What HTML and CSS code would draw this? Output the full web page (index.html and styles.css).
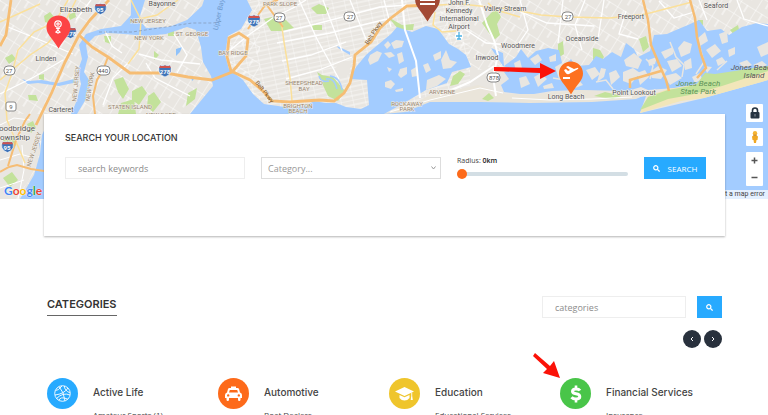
FILE: index.html
```html
<!DOCTYPE html>
<html lang="en">
<head>
  <meta charset="UTF-8">
  <meta name="viewport" content="width=device-width, initial-scale=1.0">
  <title>Search your location</title>
  <link rel="stylesheet" href="styles.css">
</head>
<body>
  <div class="map">
    <svg class="map-canvas" viewBox="0 0 768 199" preserveAspectRatio="xMidYMin slice" role="img" aria-label="Map">
      <defs>
        <pattern id="streets" width="12" height="9" patternUnits="userSpaceOnUse" patternTransform="rotate(-12)">
          <path d="M0 0H12M0 0V9M0 5H12" stroke="#fff" stroke-width="0.7" fill="none" />
        </pattern>
        <pattern id="blocks" width="17" height="14" patternUnits="userSpaceOnUse" patternTransform="rotate(32)">
          <path d="M0 0H17M0 0V14M8 0V8" stroke="#fff" stroke-width="0.9" fill="none" />
        </pattern>
        <symbol id="interstate" viewBox="0 0 14 12">
          <path d="M2 0Q4 1 7 0Q10 1 12 0Q14 3 13 7Q11 11 7 12Q3 11 1 7Q0 3 2 0Z" fill="#3f74b8" stroke="#fff" stroke-width="0.7" />
          <path d="M2 0.500Q4 1.500 7 0.500Q10 1.500 12 0.500L12.800 3H1.200Z" fill="#d0544e" />
        </symbol>
        <symbol id="pin" viewBox="0 0 24 34">
          <path d="M12 0.500C5 0.500 0 5.500 0 12.500C0 19 5 22 12 33.500C19 22 24 19 24 12.500C24 5.500 19 0.500 12 0.500Z" />
        </symbol>
      </defs>

      <rect width="768" height="199" fill="#e9e6e1" />
      <rect width="260" height="199" fill="url(#blocks)" />
      <rect x="220" width="250" height="112" fill="url(#streets)" />
      <rect x="440" width="328" height="70" fill="url(#blocks)" />

      <!-- parks -->
      <g fill="#c3e29b">
        <path d="M44 16l6-4 5 6-4 6-6-2zM68 15l7-3 1 5-6 3zM5 58l7-4 4 5-7 5zM28 95l8 0 2 6-9-1zM39 75l5-1 0 6-5-1z" />
        <path d="M168 31h6v5h-6zM104 36l7 0 0 8-6-2zM154 51l5 4-5 5zM114 80l9-3 6 12-6 10-5-7zM132 91l10-5 5 7-8 12-7-5zM121 103l13-4 2 15h-18zM148 96l6-4 7 10-8 10-6-5zM188 93l9-5-2 11-9 7z" />
        <path d="M264 19l12-3 10 4 8 8-12 3-11 0zM311 8l8-4 10 4-3 6-9 0zM312 25l10 0 0 5-9 0zM317 72l5 3 11 2 12 14-7 10-10-5zM388 17l14 8 12-1-1 6-14 0z" />
        <path d="M482 23l9-10 5-5 5 9-4 7 3 11-6 5zM453 76l7-5 5 3-7 10-8 2z" />
        <path d="M558 44l5-3 1 13-6 4zM593 48l7 2 4 7-5 7-6-3zM639 39l7-3 3 11-6 5zM698 20l5 0 0 5-5-1zM730 30l8-5 2 9-5 2z" />
        <path d="M3 140l8-5 6 8-4 8-9-2zM15 117l9-2 4 7-8 3zM3 175l9-6 6 8-8 7z" />
      </g>

      <!-- bays and ocean -->
      <g fill="#a3ccff">
        <path d="M131 0L145 0L139 19L146 28L169 27L187 20L202 6L204 0H247L252 10L241 29L228 36L225 55L229 69L243 80L253 94L264 104L292 108L306 106L314 101L326 103L336 103L346 107L361 109L369 105L367 80L350 79L356 67L366 55L374 48L391 34L397 27L412 32L426 26L438 29L449 44L458 49L466 55L471 67L452 72L447 83L426 90L404 103L384 114H190L213 86L211 76L203 62L201 47L196 30L187 27L166 34L147 36L124 34L108 33L95 36L86 45L88 57L84 72L91 83L86 99L77 114H71L77 100L81 84L78 70L82 59L79 45L86 34L101 29L121 26L131 15Z" />
        <path d="M384 114L426 102L456 99L483 102L530 102L590 100L634 98L646 96L640 113L704 98L768 80V199H20L34 175L40 154L42 135L52 114Z" />
        <path d="M491 48L503 53L504 66L516 57L521 49L528 58L536 51L548 48L559 50L563 67L571 59L576 66L589 65L596 56L603 59L612 52L621 57L626 43L634 49L638 57L650 51L654 35L667 34L676 30L688 25L699 20L707 31L721 29L729 35L742 27L757 23L768 24V73L744 77L725 83L707 78L690 87L674 88L648 90L641 87L621 93L596 91L578 90L552 91L528 95L504 92L501 85L509 79L504 72L516 70L503 66Z" />
        <path d="M337 46L350 52L350 55L338 48ZM22 79L29 81L42 80L58 83L78 78V82L59 86L38 83L28 84ZM28 129L33 142L40 143V150L31 147Z" />
      </g>

      <!-- land in front of the bay -->
      <path d="M20 114H44V128L38 136L40 150L35 166L28 182L14 199H0V114Z" fill="#e9e6e1" />
      <path d="M3 140l8-5 6 8-4 8-9-2zM3 178l9-6 6 8-8 7zM27 124l6-3 3 7-5 5z" fill="#c3e29b" />
      <path d="M0 125L14 118L30 120M0 160L20 154L34 158M18 199L24 170L22 145M0 188L24 180" stroke="#fff" fill="none" />

      <!-- marsh islands -->
      <g fill="#e9e6e1">
        <path d="M370 55l7-4 5 2-4 8-8 4-2-5zM384 45l4-4 3 4-4 4zM391 43l5-3 8 1-2 6-8 2zM384 53l7-1 4 4-6 2zM397 54l5-2 2 9-5 3zM400 69l7-2 0 7-6 4-3-3zM411 70l5-3 1 9-5 1zM385 82l6-2 4 4-4 5-6-2zM395 90l8-2 0 3-7 1zM387 67l5 2-3 3zM433 55l8-4 0 7-6 3zM423 65l5-2 3 7-5 3zM441 60l5-10 4 10 7 2-6 6-8 1zM427 80l12-5 7 4-9 7-11 4z" />
        <path d="M341 60l10 2-2 13-10 3-5-7zM519 78l7-2 4 8-9 4zM530 59l8-5 4 6-7 5zM534 77l7-4 6 6-9 8zM543 86l9-3 2 5-10 1zM549 57l7-3 0 7-6 1zM555 67l7-4 4 8-7 8zM586 70l9-3 5 7-8 6zM601 68l5 1-2 8-7 5zM609 73l7-3 4 7-9 8zM624 60l10-7 8 7-4 9-12-3zM623 72l10-4 7 5-9 11-8-3zM637 73l8-3 4 7-9 8zM648 60l9-3-2 7-6 2zM650 72l8-6 9 4-6 9-9-1z" />
        <path d="M661 52l12-5 0 7-8 5zM667 61l10-2 5 7-10 6zM664 76l12-3 6 5-12 7zM678 48l6-7 8 3-2 9-9 4zM684 62l7-4 1 10-7 2zM698 38l7-6 3 9-8 5zM706 50l9-6 6 7-9 7zM719 34l8-3 1 11-6 2zM716 60l6-3 4 5-8 4zM728 50l7-3 0 7-6 3zM704 66l8 1-5 6zM739 63l8-3 5 5-8 3zM757 47l11-5v12l-7 3zM753 65l9-4 5 4-7 3zM692 77l8-4 2 6-7 4zM514 63l6-3 2 8-6 3zM570 81l7-3 6 7-8 3z" />
      </g>
      <g fill="none" stroke="#e9e6e1" stroke-width="1.500">
        <path d="M646 59l7 7-3 13M670 42l6 15 8 8-2 12M699 44l5 18-8 12M717 70l10-9M553 78l17 3 5-10M596 82l10-2 7 9" />
      </g>

      <!-- barrier beaches -->
      <path d="M384 114L410 105L428 96L452 91L478 85L505 94L540 94L580 90L628 91L645 95L636 99L592 102L530 103L480 102L430 102L405 112Z" fill="#eae5da" />
      <path d="M640 113L648 96L668 89L698 84L717 78L768 68V80L704 98L681 101Z" fill="#f2e6ba" />
      <path d="M640 110L648 97L668 90L696 85L705 73L715 74L768 66V71L722 86L690 95L668 99ZM594 96l11-4 17 4-10 3zM482 99l7-6 5 5-6 3z" fill="#c3e29b" />
      <path d="M512 98L550 100L592 99L632 97M390 112L430 100L480 88L503 93" fill="none" stroke="#fff" stroke-width="1" />
      <path d="M326 79q8-2 11 10M330 76q10 1 12 14M319 76q2 7 10 5" fill="none" stroke="#a3ccff" stroke-width="1.500" />
      <path d="M176 49l6-2-2 5-4 4zM191 77l3 2-2 2z" fill="#8fc2fa" />

      <!-- roads -->
      <g fill="none" stroke="#fff" stroke-width="1.300">
        <path d="M402 0L405 30L416 61L420 98M479 0L487 25L494 40L498 55L493 77L496 96M440 95L470 82L494 66" stroke-width="2" />
        <path d="M0 94L34 77L63 60M8 27L45 42L73 54M91 0L76 20M105 31L112 46L122 53M132 59L113 78L103 105M139 54L161 60L200 64M146 63L155 78L190 96M177 73L187 55L174 34" />
        <path d="M229 51L250 34L274 17L293 8L306 0M282 32L316 24L380 7L421 4M299 0L317 39L339 79M323 0L342 51M350 0L368 44M384 0L391 27M277 43L330 33L387 19M282 61L311 55L346 42M286 79L319 70L352 57" />
        <path d="M460 26L486 43L510 45M512 8L547 23L594 26M520 0L528 30L517 46M563 0L558 43M585 0L575 25L582 50M604 0L598 39M626 11L619 34L638 39M659 1L674 18L694 12M699 0L707 20M737 0L744 19L768 26" />
      </g>
      <g fill="none" stroke="#fbe09a" stroke-width="1.500">
        <path d="M0 80L30 55L48 43L65 22L76 0M25 163L7 120L5 93L12 73L18 50L34 32L55 22L68 0M131 0L136 10L141 20L139 49L128 64M281 20L284 42L290 78L292 101M135 20L157 15L178 0M0 22L40 4" />
        <path d="M419 6L460 4L510 9L541 15L568 17L610 18L646 14L692 2M435 12L433 25L442 32L456 31M488 3L496 10L520 17" />
      </g>
      <g fill="none" stroke="#f6bd74" stroke-width="2.800">
        <path d="M0 46L6 35L11 0M36 125L52 92L65 62L79 35L90 20L109 0" />
        <path d="M79 35L92 47L108 57L119 65L130 73L166 73L188 77L212 80L232 72L246 56L248 39L239 33L229 38L227 57L231 71L250 80L264 92L272 101L290 102L319 100L334 101L344 93L350 83L354 66L355 55L371 42L380 28L391 18L407 6L430 5" />
        <path d="M108 57L103 70L97 80L93 96L95 114M258 15L266 4L278 0M266 4L283 27M248 29L256 17" stroke-width="2" />
        <path d="M643 0L648 20L651 45L659 64L666 80L669 91M630 88L630 80L661 71M690 0L695 18L697 37L701 54L706 68L697 78" stroke-width="2.500" />
        <path d="M0 172L9 167L17 165L31 169L44 171M8 166L16 140L25 121L30 114" stroke-width="2" />
      </g>
      <path d="M99 32L132 32L159 28L192 23L213 23L223 21" fill="none" stroke="#8295b2" stroke-width="0.700" stroke-dasharray="3 2" />

      <!-- road signs -->
      <g class="sign-blue">
        <use href="#interstate" x="94" y="3" width="13" height="12" /><text x="100" y="12">95</text>
        <use href="#interstate" x="64" y="27" width="13" height="12" /><text x="71" y="36">278</text>
        <use href="#interstate" x="158" y="65" width="14" height="12" /><text x="165" y="74">278</text>
        <use href="#interstate" x="247" y="15" width="14" height="12" /><text x="254" y="24">278</text>
        <use href="#interstate" x="1" y="141" width="13" height="12" /><text x="7" y="150">95</text>
      </g>
      <g class="sign-white">
        <rect x="4" y="66" width="11" height="9" rx="4" /><text x="9" y="73">27</text>
        <rect x="97" y="66" width="13" height="9" rx="4" /><text x="103" y="73">440</text>
        <rect x="274" y="13" width="11" height="9" rx="4" /><text x="279" y="20">27</text>
        <rect x="344" y="12" width="11" height="9" rx="4" /><text x="350" y="19">27</text>
        <rect x="562" y="12" width="11" height="9" rx="4" /><text x="568" y="19">27</text>
        <rect x="487" y="73" width="13" height="9" rx="4" /><text x="494" y="80">878</text>
        <rect x="6" y="102" width="10" height="9" rx="2" /><text x="11" y="109">9</text>
      </g>

      <!-- place names -->
      <g class="town">
        <text x="76" y="12" class="town-big">Elizabeth</text>
        <text x="162" y="6">Bayonne</text>
        <text x="46" y="61">Linden</text>
        <text x="61" y="112">Carteret</text>
        <text x="17" y="131" class="town-big">oodbridge</text>
        <text x="15" y="140" class="town-big">ownship</text>
        <text x="459" y="5">John F.</text>
        <text x="459" y="13">Kennedy</text>
        <text x="459" y="21">International</text>
        <text x="459" y="29">Airport</text>
        <text x="505" y="11">Valley Stream</text>
        <text x="518" y="48">Woodmere</text>
        <text x="487" y="60">Inwood</text>
        <text x="582" y="41">Oceanside</text>
        <text x="631" y="19">Freeport</text>
        <text x="716" y="8">Seaford</text>
        <text x="566" y="99">Long Beach</text>
        <text x="634" y="95">Point Lookout</text>
      </g>
      <g class="district">
        <text x="148" y="23">NEW JERSEY</text>
        <text x="149" y="40">NEW YORK</text>
        <text x="192" y="36">ST. GEORGE</text>
        <text x="233" y="55">BAY RIDGE</text>
        <text x="130" y="109">STATEN ISLAND</text>
        <text x="161" y="117">NEW DORP</text>
        <text x="280" y="6">PARK SLOPE</text>
        <text x="304" y="85">SHEEPSHEAD</text>
        <text x="304" y="91">BAY</text>
        <text x="298" y="108">BRIGHTON</text>
        <text x="298" y="113">BEACH</text>
        <text x="407" y="106">ROCKAWAY</text>
        <text x="407" y="111">PARK</text>
        <text x="442" y="94">ARVERNE</text>
        <text transform="translate(78 84) rotate(-84)">NEW JERSEY</text>
        <text transform="translate(92 87) rotate(-80)">NEW YORK</text>
        <text transform="translate(36 150) rotate(-72)">NEW JERSEY</text>
      </g>
      <text class="road-name" transform="translate(375 34) rotate(-57)">Belt Pkwy</text>
      <text class="road-name" transform="translate(263 93) rotate(52)">Belt Pkwy</text>
      <text class="water-name" transform="translate(221 15) rotate(-78)">Upper Bay</text>
      <g class="park-name">
        <text x="698" y="86">Jones Beach</text>
        <text x="698" y="94">State Park</text>
      </g>
      <g class="island-name">
        <text x="753" y="70">Jones Beach</text>
        <text x="754" y="78">Island</text>
      </g>
      <circle cx="459" cy="36" r="4" fill="#fff" />
      <path d="M459 32v7M456 36h6M457 39h4" stroke="#4db1e4" stroke-width="1.300" />

      <!-- pins -->
      <use href="#pin" x="46" y="15" width="25" height="34" fill="#fc4445" />
      <g fill="none" stroke="#fff" stroke-width="1.200">
        <circle cx="58" cy="24" r="3.200" /><circle cx="58" cy="24" r="1.200" />
        <path d="M56 28l2 1 2-1M58 28v3M56 32l2-2 2 2-2 1z" />
      </g>
      <use href="#pin" x="415" y="-13" width="25" height="35" fill="#a34a35" />
      <path d="M420 0h15M420 4h15" stroke="#fff" stroke-width="2.200" />
      <use href="#pin" x="559" y="61" width="24" height="34" fill="#fd7120" />
      <path d="M564 70L566 69L568 71L570 70L566 67L568 66L574 69L577 68Q579 67 578 69L569 74Q566 75 564 70ZM563 77H570V79H563Z" fill="#fff" />
      <path d="M494 67L540 68V63L556 71L540 79V73L494 71Z" fill="#fb1208" />
    </svg>

    <a class="google" href="#" aria-label="Google"><span class="g-blue">G</span><span class="g-red">o</span><span class="g-yellow">o</span><span class="g-blue">g</span><span class="g-green">l</span><span class="g-red">e</span></a>
    <div class="map-controls">
      <button class="map-button" aria-label="Lock map">
        <svg width="10" height="12" viewBox="0 0 10 12"><path d="M2.500 6V3.500a2.500 2.500 0 0 1 5 0V6" fill="none" stroke="#263340" stroke-width="1.600" /><rect x="0.500" y="5" width="9" height="6.500" rx="1" fill="#263340" /><path d="M5 7v2.500" stroke="#8b939b" /></svg>
      </button>
      <button class="map-button" aria-label="Street View">
        <svg width="8" height="12" viewBox="0 0 8 12"><circle cx="4" cy="2.200" r="2.200" fill="#f5b433" /><path d="M1 5.500Q4 3 7 5.500L6.500 9L5.500 9L5 12H3L2.500 9L1.500 9Z" fill="#f0a722" /><path d="M2.200 4.200h3.600" stroke="#b9741a" stroke-width="0.800" /></svg>
      </button>
      <div class="zoom">
        <button class="zoom-button" aria-label="Zoom in"><svg width="7" height="7" viewBox="0 0 7 7"><path d="M0.500 3.500h6M3.500 0.500v6" stroke="#555" stroke-width="1.500" /></svg></button>
        <button class="zoom-button" aria-label="Zoom out"><svg width="7" height="7" viewBox="0 0 7 7"><path d="M0.500 3.500h6" stroke="#555" stroke-width="1.500" /></svg></button>
      </div>
    </div>
    <a class="map-error" href="#">Report a map error</a>
  </div>

  <form class="search-card">
    <h2 class="search-title">SEARCH YOUR LOCATION</h2>
    <div class="search-row">
      <input class="field" type="text" placeholder="search keywords" aria-label="Search keywords">
      <div class="select-wrap">
        <select class="select" aria-label="Category">
          <option>Category...</option>
        </select>
        <svg class="select-arrow" width="5" height="4" viewBox="0 0 5 4"><path d="M0.500 0.500l2 2.500 2-2.500" fill="none" stroke="#999" /></svg>
      </div>
      <div class="radius">
        <label for="radius">Radius: <strong id="radiusValue">0km</strong></label>
        <input class="slider" id="radius" type="range" min="0" max="100" value="0">
      </div>
      <button class="search-button" type="button">
        <svg width="7" height="7" viewBox="0 0 7 7"><circle cx="2.800" cy="2.800" r="2.100" fill="none" stroke="#fff" stroke-width="1.200" /><path d="M4.400 4.400l2.200 2.200" stroke="#fff" stroke-width="1.300" /></svg>
        SEARCH
      </button>
    </div>
  </form>

  <section class="categories">
    <div class="categories-header">
      <h2 class="categories-title">CATEGORIES</h2>
      <form class="categories-search">
        <input class="field" type="text" placeholder="categories" aria-label="Categories">
        <button class="icon-button" type="button" aria-label="Search categories">
          <svg width="7" height="7" viewBox="0 0 7 7"><circle cx="2.800" cy="2.800" r="2.100" fill="none" stroke="#fff" stroke-width="1.200" /><path d="M4.400 4.400l2.200 2.200" stroke="#fff" stroke-width="1.300" /></svg>
        </button>
      </form>
    </div>
    <div class="pager">
      <button class="pager-button" aria-label="Previous"><svg width="4" height="6" viewBox="0 0 4 6"><path d="M3 1L1 3l2 2" fill="none" stroke="#fff" /></svg></button>
      <button class="pager-button" aria-label="Next"><svg width="4" height="6" viewBox="0 0 4 6"><path d="M1 1l2 2-2 2" fill="none" stroke="#fff" /></svg></button>
    </div>

    <div class="category-list">
      <div class="category">
        <div class="category-icon blue">
          <svg width="17" height="17" viewBox="0 0 17 17" fill="none" stroke="#fff" stroke-width="0.900"><circle cx="8.500" cy="8.500" r="7.800" /><path d="M1 10Q10 9 14 3M5 1.500Q10 7 11 16M8 1Q4 6 1.500 5.500M2.500 13.500Q9 7 16 10M10.500 1Q10 5 16 8M5 15.500Q6 11 13.500 14" /></svg>
        </div>
        <div class="category-text">
          <h3>Active Life</h3>
          <a href="#">Amateur Sports (1)</a>
        </div>
      </div>
      <div class="category">
        <div class="category-icon orange">
          <svg width="17" height="15" viewBox="0 0 17 15"><path fill="#fff" fill-rule="evenodd" d="M6 0.500H11V2H12.500Q13.700 2 14 3L15 6.500Q17 7 17 9V12H15.500V13.500Q15.500 15 14.200 15Q13 15 13 13.500V12H4V13.500Q4 15 2.800 15Q1.500 15 1.500 13.500V12H0V9Q0 7 2 6.500L3 3Q3.300 2 4.500 2H6ZM4.800 4L4 6.500H13L12.200 4ZM3.200 8.200A1.200 1.200 0 1 0 3.200 10.600A1.200 1.200 0 1 0 3.200 8.200ZM13.800 8.200A1.200 1.200 0 1 0 13.800 10.600A1.200 1.200 0 1 0 13.800 8.200Z" /></svg>
        </div>
        <div class="category-text">
          <h3>Automotive</h3>
          <a href="#">Boat Dealers</a>
        </div>
      </div>
      <div class="category">
        <div class="category-icon yellow">
          <svg width="19" height="14" viewBox="0 0 19 14" fill="#fff"><path d="M9.500 0L19 4.500L9.500 9L0 4.500ZM4.500 8L9.500 10.200L14.500 8V11Q12.500 13.500 9.500 13.500Q6.500 13.500 4.500 11Z" /><path d="M16.300 5.500H17.200V9L17.800 13H15.700L16.300 9Z" /></svg>
        </div>
        <div class="category-text">
          <h3>Education</h3>
          <a href="#">Educational Services</a>
        </div>
      </div>
      <div class="category">
        <div class="category-icon green">
          <svg width="12" height="18" viewBox="0 0 12 18" fill="none" stroke="#fff"><path d="M10 5.500Q9 4 6 4Q2.500 4 2.500 6.300Q2.500 8.300 6 8.800Q9.800 9.500 9.800 11.700Q9.800 14 6 14Q3 14 1.500 12.200" stroke-width="3" /><path d="M6 0.500V4M6 14V17.500" stroke-width="2.600" /></svg>
        </div>
        <svg class="arrow" width="28" height="26" viewBox="0 0 28 26"><path d="M2 0L17 13L21 8L27 25L10 20L14 16L0 3Z" fill="#fb1208" /></svg>
        <div class="category-text">
          <h3>Financial Services</h3>
          <a href="#">Insurance</a>
        </div>
      </div>
    </div>
  </section>

  <script>
    const radius = document.getElementById('radius');
    const radiusValue = document.getElementById('radiusValue');

    radius.addEventListener('input', () => {
      radiusValue.textContent = radius.value + 'km';
    });
  </script>
</body>
</html>
```
FILE: styles.css
```css
* {
  box-sizing: border-box;
}
body {
  height: 100vh;
  margin: 0;
  overflow: hidden;
  background: #fff;
  color: #444;
  font-family: "Open Sans", sans-serif;
  font-size: 8px;
}
h2,
h3 {
  margin: 0;
  font-family: Inter, sans-serif;
  font-weight: 500;
}
a {
  color: inherit;
  text-decoration: none;
}
button {
  display: flex;
  align-items: center;
  justify-content: center;
  padding: 0;
  border: none;
  font-family: inherit;
  cursor: pointer;
}

/* Map */
.map {
  position: relative;
  height: 199px;
  overflow: hidden;
}
.map-canvas {
  display: block;
  width: 100%;
  height: 100%;
  font-family: Roboto, sans-serif;
  font-size: 7px;
  text-anchor: middle;
}
.town text {
  fill: #555;
  stroke: #f5f3f0;
  stroke-width: 1px;
  paint-order: stroke;
}
.town .town-big {
  font-size: 8px;
}
.district text {
  fill: #98866f;
  font-size: 6px;
  stroke: #f2efea;
  stroke-width: 1px;
  paint-order: stroke;
}
.road-name {
  fill: #80592c;
  font-size: 6px;
}
.water-name {
  fill: #6f9bd0;
  font-size: 7px;
}
.park-name text {
  fill: #5d9258;
  font-size: 8px;
  font-style: italic;
}
.island-name text {
  fill: #555;
  font-size: 8px;
  font-style: italic;
}
.sign-blue text {
  fill: #fff;
  font-size: 6px;
  font-weight: bold;
}
.sign-white text {
  fill: #555;
  font-size: 6px;
}
.sign-white rect {
  fill: #fff;
  stroke: #888;
}
.google {
  position: absolute;
  left: 4px;
  bottom: 0;
  font-family: Lato, sans-serif;
  font-size: 12px;
  font-weight: bold;
  line-height: 16px;
  text-shadow: 0 0 1px #fff, 0 0 1px #fff;
}
.g-blue {
  color: #4285f4;
}
.g-red {
  color: #ea4335;
}
.g-yellow {
  color: #fbbc05;
}
.g-green {
  color: #34a853;
}
.map-controls {
  position: absolute;
  top: 104px;
  right: 5px;
  display: flex;
  flex-direction: column;
  gap: 6px;
  width: 17px;
}
.map-button,
.zoom {
  width: 17px;
  background: #fff;
  border-radius: 1px;
}
.map-button {
  height: 18px;
}
.zoom-button {
  width: 17px;
  height: 17px;
  background: none;
}
.map-error {
  position: absolute;
  right: 0;
  bottom: 0;
  padding: 0 3px;
  background: rgba(255, 255, 255, 0.7);
  font-family: Roboto, sans-serif;
  font-size: 7px;
  line-height: 9px;
}

/* Search card */
.search-card {
  position: relative;
  margin: -85px 43px 0 44px;
  padding: 18px 19px 57px 21px;
  background: #fff;
  box-shadow: 0 1px 2px rgba(0, 0, 0, 0.3);
}
.search-title {
  margin-bottom: 13px;
  color: #333;
  font-size: 9px;
  line-height: 12px;
}
.search-row {
  display: grid;
  grid-template-columns: 180fr 180fr 171fr 62px;
  gap: 16px;
}
.field {
  width: 100%;
  height: 22px;
  padding: 0 12px;
  border: 1px solid #eee;
  color: #555;
  font-family: inherit;
  font-size: 9px;
}
.field::placeholder {
  color: #8c8c8c;
}
.select-wrap {
  position: relative;
}
.select {
  appearance: none;
  width: 100%;
  height: 22px;
  padding: 0 6px;
  border: 1px solid #ddd;
  border-radius: 0;
  background: #fff;
  color: #999;
  font-family: inherit;
  font-size: 9px;
}
.select-arrow {
  position: absolute;
  top: 9px;
  right: 5px;
}
.radius {
  display: flex;
  flex-direction: column;
  gap: 4px;
}
.radius label {
  font-size: 7px;
  line-height: 8px;
}
.radius strong {
  color: #222;
  font-weight: 600;
}
.slider {
  appearance: none;
  width: 100%;
  height: 10px;
  margin: 0;
  background: none;
}
.slider::-webkit-slider-runnable-track {
  height: 4px;
  border-radius: 2px;
  background: #d3dee4;
}
.slider::-webkit-slider-thumb {
  appearance: none;
  width: 10px;
  height: 10px;
  margin-top: -3px;
  border-radius: 50%;
  background: #fd6a1a;
}
.search-button {
  gap: 8px;
  height: 22px;
  background: #27aaff;
  color: #fff;
  font-size: 8px;
}

/* Categories */
.categories {
  margin: 60px 46px 0 47px;
}
.categories-header {
  display: flex;
  align-items: flex-start;
  justify-content: space-between;
}
.categories-title {
  padding-bottom: 2px;
  border-bottom: 1px solid #666;
  color: #333;
  font-size: 11px;
  font-weight: 600;
  line-height: 17px;
}
.categories-search {
  display: grid;
  grid-template-columns: 144px 25px;
  gap: 11px;
}
.icon-button {
  height: 22px;
  background: #27aaff;
}
.pager {
  display: flex;
  justify-content: flex-end;
  gap: 3px;
  margin-top: 12px;
}
.pager-button {
  width: 18px;
  height: 18px;
  border-radius: 50%;
  background: #29313d;
}
.category-list {
  display: grid;
  grid-template-columns: repeat(4, 1fr);
  gap: 9px;
  margin-top: 30px;
}
.category {
  position: relative;
  display: flex;
  gap: 15px;
}
.category-icon {
  display: flex;
  align-items: center;
  justify-content: center;
  width: 31px;
  height: 31px;
  border-radius: 50%;
}
.blue {
  background: #27aaff;
}
.orange {
  background: #fd6a1a;
}
.yellow {
  background: #efc52c;
}
.green {
  background: #49c549;
}
.category-text {
  padding-top: 7px;
}
.category-text h3 {
  margin-bottom: 10px;
  font-size: 10px;
  line-height: 14px;
}
.category-text a {
  display: block;
  line-height: 12px;
}
.arrow {
  position: absolute;
  top: -25px;
  left: -27px;
}
```
